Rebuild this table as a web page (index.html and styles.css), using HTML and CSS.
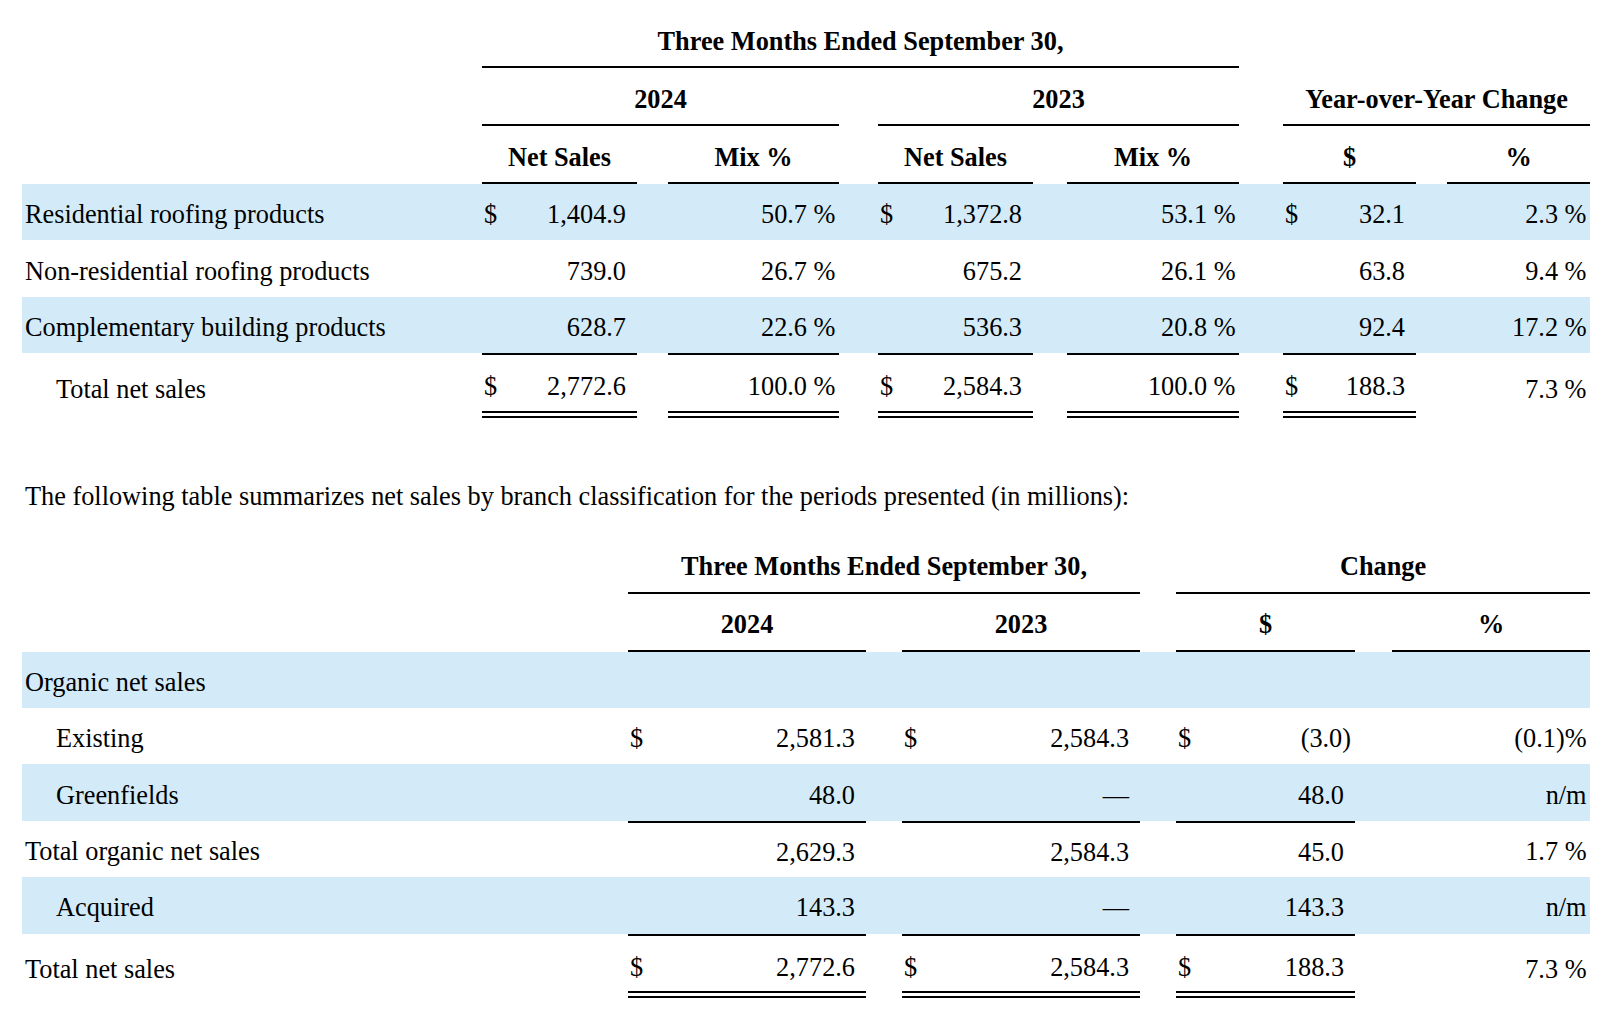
FILE: index.html
```html
<!DOCTYPE html>
<html lang="en">
<head>
<meta charset="utf-8">
<title>Net sales</title>
<link rel="stylesheet" href="styles.css">
</head>
<body>
<table class="fin">
  <colgroup>
    <col class="w460"><col class="w155"><col class="w31"><col class="w171"><col class="w39"><col class="w155"><col class="w34"><col class="w172"><col class="w44"><col class="w133"><col class="w31"><col class="w143">
  </colgroup>
  <tr class="hrow">
    <td></td><td colspan="7" class="hd ul">Three Months Ended September 30,</td><td></td><td colspan="3"></td>
  </tr>
  <tr class="hrow">
    <td></td><td colspan="3" class="hd ul">2024</td><td></td><td colspan="3" class="hd ul">2023</td><td></td><td colspan="3" class="hd ul">Year-over-Year Change</td>
  </tr>
  <tr class="hrow">
    <td></td><td class="hd ul">Net Sales</td><td></td><td class="hd ul">Mix %</td><td></td><td class="hd ul">Net Sales</td><td></td><td class="hd ul">Mix %</td><td></td><td class="hd ul">$</td><td></td><td class="hd ul">%</td>
  </tr>
  <tr class="shade">
    <td class="lbl">Residential roofing products</td><td class="num"><span class="cur">$</span>1,404.9</td><td></td><td class="pct">50.7 %</td><td></td><td class="num"><span class="cur">$</span>1,372.8</td><td></td><td class="pct">53.1 %</td><td></td><td class="num"><span class="cur">$</span>32.1</td><td></td><td class="pct">2.3 %</td>
  </tr>
  <tr>
    <td class="lbl">Non-residential roofing products</td><td class="num">739.0</td><td></td><td class="pct">26.7 %</td><td></td><td class="num">675.2</td><td></td><td class="pct">26.1 %</td><td></td><td class="num">63.8</td><td></td><td class="pct">9.4 %</td>
  </tr>
  <tr class="shade">
    <td class="lbl">Complementary building products</td><td class="num">628.7</td><td></td><td class="pct">22.6 %</td><td></td><td class="num">536.3</td><td></td><td class="pct">20.8 %</td><td></td><td class="num">92.4</td><td></td><td class="pct">17.2 %</td>
  </tr>
  <tr class="tot">
    <td class="lbl ind">Total net sales</td><td class="num tl dbl"><span class="cur">$</span>2,772.6</td><td></td><td class="pct tl dbl">100.0 %</td><td></td><td class="num tl dbl"><span class="cur">$</span>2,584.3</td><td></td><td class="pct tl dbl">100.0 %</td><td></td><td class="num tl dbl"><span class="cur">$</span>188.3</td><td></td><td class="pct">7.3 %</td>
  </tr>
</table>

<p class="intro">The following table summarizes net sales by branch classification for the periods presented (in millions):</p>

<table class="fin">
  <colgroup>
    <col class="w606"><col class="w238"><col class="w36"><col class="w238"><col class="w36"><col class="w179"><col class="w37"><col class="w198">
  </colgroup>
  <tr class="hrow">
    <td></td><td colspan="3" class="hd ul">Three Months Ended September 30,</td><td></td><td colspan="3" class="hd ul">Change</td>
  </tr>
  <tr class="hrow">
    <td></td><td class="hd ul">2024</td><td></td><td class="hd ul">2023</td><td></td><td class="hd ul">$</td><td></td><td class="hd ul">%</td>
  </tr>
  <tr class="shade">
    <td class="lbl">Organic net sales</td><td></td><td></td><td></td><td></td><td></td><td></td><td></td>
  </tr>
  <tr>
    <td class="lbl ind">Existing</td><td class="num"><span class="cur">$</span>2,581.3</td><td></td><td class="num"><span class="cur">$</span>2,584.3</td><td></td><td class="num neg"><span class="cur">$</span>(3.0)</td><td></td><td class="pct">(0.1)%</td>
  </tr>
  <tr class="shade">
    <td class="lbl ind">Greenfields</td><td class="num">48.0</td><td></td><td class="num">—</td><td></td><td class="num">48.0</td><td></td><td class="pct">n/m</td>
  </tr>
  <tr>
    <td class="lbl">Total organic net sales</td><td class="num tl">2,629.3</td><td></td><td class="num tl">2,584.3</td><td></td><td class="num tl">45.0</td><td></td><td class="pct">1.7 %</td>
  </tr>
  <tr class="shade">
    <td class="lbl ind">Acquired</td><td class="num">143.3</td><td></td><td class="num">—</td><td></td><td class="num">143.3</td><td></td><td class="pct">n/m</td>
  </tr>
  <tr class="tot">
    <td class="lbl">Total net sales</td><td class="num tl dbl"><span class="cur">$</span>2,772.6</td><td></td><td class="num tl dbl"><span class="cur">$</span>2,584.3</td><td></td><td class="num tl dbl"><span class="cur">$</span>188.3</td><td></td><td class="pct">7.3 %</td>
  </tr>
</table>
</body>
</html>
```

FILE: styles.css
```css
html, body {
  margin: 0;
  background: #ffffff;
}

body {
  padding: 10px 22px 0;
  font-family: "Liberation Serif", "Times New Roman", serif;
  font-size: 26.3px;
  line-height: 30px;
  color: #000000;
}

.fin {
  border-collapse: separate;
  border-spacing: 0;
  table-layout: fixed;
  width: 1568px;
}

.fin td {
  padding: 6px 0 0;
  vertical-align: middle;
  white-space: nowrap;
}

.fin tr {
  height: 56.4px;
}

.fin tr.hrow {
  height: 58px;
}

.fin tr.tot {
  height: 64.5px;
}

.fin tr.tot td {
  padding-top: 9px;
}

.fin td.hd {
  font-weight: bold;
  text-align: center;
  padding-top: 7px;
}

.fin tr.shade {
  background: #d3ebf9;
}

.fin td.lbl {
  padding-left: 3px;
}

.fin td.ind {
  padding-left: 34px;
}

.fin td.num {
  text-align: right;
  padding-right: 11px;
}

.fin td.neg {
  padding-right: 4px;
}

.fin td.pct {
  text-align: right;
  padding-right: 3.5px;
}

.cur {
  float: left;
  padding-left: 2px;
}

.ul {
  border-bottom: 2px solid #000000;
}

.tl {
  border-top: 2px solid #000000;
}

.dbl {
  border-bottom: 7px double #000000;
}

.intro {
  margin: 64px 0 24px;
  padding-left: 3px;
}

.w460 { width: 460px; }
.w155 { width: 155px; }
.w31 { width: 31px; }
.w171 { width: 171px; }
.w39 { width: 39px; }
.w34 { width: 34px; }
.w172 { width: 172px; }
.w44 { width: 44px; }
.w133 { width: 133px; }
.w143 { width: 143px; }
.w606 { width: 606px; }
.w238 { width: 238px; }
.w36 { width: 36px; }
.w179 { width: 179px; }
.w37 { width: 37px; }
.w198 { width: 198px; }
```
